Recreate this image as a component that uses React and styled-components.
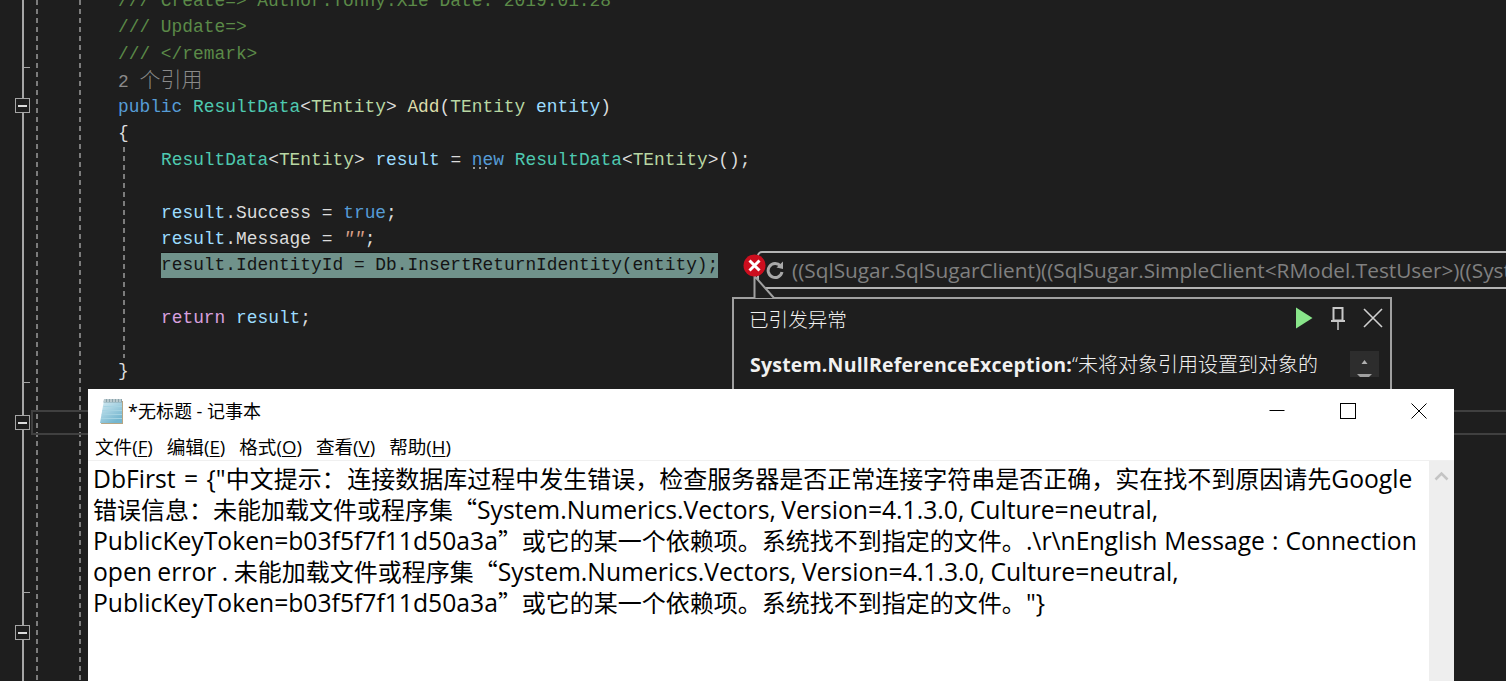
import React from 'react';
import styled, { createGlobalStyle } from 'styled-components';

const GlobalStyle = createGlobalStyle`
    html, body {
        margin: 0;
        padding: 0;
        background: #1e1e1e;
    }
`;

const CJK = '"Noto Sans CJK SC", sans-serif';
const UI = `"Open Sans", "Noto Sans CJK SC", sans-serif`;

const COMMENT = '#5b8a48';
const TYPE = '#4ec9b0';
const GENERIC = '#b8d7a3';
const KEYWORD = '#569cd6';
const METHOD = '#dcdcaa';
const PARAM = '#9cdcfe';
const PLAIN = '#dcdcdc';
const CONTROL = '#d8a0df';
const STRING = '#d69d85';

// 화면 전체
const Page = styled.div`
    position: relative;
    width: 1506px;
    height: 681px;
    overflow: hidden;
    background: #1e1e1e;
`;

const Editor = styled.div`
    display: flex;
    height: 681px;
`;

// 왼쪽 접기 여백 + 들여쓰기 가이드
const Gutter = styled.div`
    display: flex;
    flex: 0 0 118px;
    height: 100%;
    padding-left: 22px;
    box-sizing: border-box;
`;

const OutlineTrack = styled.div`
    position: relative;
    flex: 0 0 2px;
    height: 100%;
    background: #a5a5a5;
`;

const OutlineTick = styled.div`
    position: absolute;
    left: 2px;
    top: ${(p) => p.$top}px;
    width: 6px;
    height: 1px;
    background: #a5a5a5;
`;

const CollapseBox = styled.div`
    position: absolute;
    left: -7px;
    top: ${(p) => p.$top}px;
    z-index: 2;
    width: 15px;
    height: 15px;
    box-sizing: border-box;
    border: 1.5px solid #a5a5a5;
    background: #1e1e1e;
    display: flex;
    align-items: center;
    justify-content: center;

    &::after {
        content: '';
        width: 9px;
        height: 2px;
        background: #dcdcdc;
    }
`;

const IndentGuide = styled.div`
    flex: 0 0 2px;
    margin-left: ${(p) => p.$gap}px;
    height: 100%;
    background: repeating-linear-gradient(#7c7c7c 0 5px, transparent 5px 9px);
`;

const CodePane = styled.div`
    flex: 1;
    margin-top: -12px;
    font-family: "Liberation Mono", monospace;
    font-size: 17.88px;
    color: ${PLAIN};
`;

const Line = styled.div`
    height: 26.45px;
    line-height: 26.45px;
    white-space: pre;
`;

const RefLine = styled(Line)`
    line-height: 23px;
`;

const Block = styled.div`
    margin-left: 5px;
    padding-left: 38px;
    background: repeating-linear-gradient(#7c7c7c 0 5px, transparent 5px 9px) left top / 2px 100% no-repeat;
`;

const Token = styled.span`
    color: ${(p) => p.$c};
`;

const StringToken = styled.span`
    color: ${STRING};
    font-style: italic;
`;

const RefCount = styled.span`
    color: #8a8a8a;
`;

const RefCountHan = styled.span`
    font-family: ${CJK};
    font-size: 21px;
    font-weight: 300;
`;

const Squiggled = styled.span`
    position: relative;
    color: ${KEYWORD};

    &::after {
        content: '';
        position: absolute;
        left: 1px;
        width: 17px;
        bottom: 1px;
        height: 2px;
        background: repeating-linear-gradient(90deg, #9a9a9a 0 2px, transparent 2px 6px);
    }
`;

const CurrentStatement = styled.span`
    display: inline-block;
    height: 26px;
    background: #70928b;
    color: #141414;
    box-shadow: inset 0 1px 0 #141414;
`;

// 현재 줄 표시
const CurrentLine = styled.div`
    position: absolute;
    left: 31px;
    right: -4px;
    top: 410px;
    height: 25px;
    box-sizing: border-box;
    border: 2px solid #404040;
`;

// 데이터 팁
const DataTip = styled.div`
    position: absolute;
    left: 757px;
    right: -10px;
    top: 251px;
    height: 38px;
    box-sizing: border-box;
    border: 2px solid #b4b4b4;
    border-top-left-radius: 5px;
    background: #1e1e1e;
    display: flex;
    align-items: center;
    padding-left: 7px;
    gap: 8px;
    overflow: hidden;
`;

const RefreshIcon = styled.svg`
    flex: none;
`;

const DataTipText = styled.span`
    font-family: "Open Sans", sans-serif;
    font-size: 20.8px;
    color: #808080;
    white-space: nowrap;
`;

const ErrorGlyph = styled.svg`
    position: absolute;
    left: 743px;
    top: 254px;
    z-index: 3;
`;

const Beak = styled.svg`
    position: absolute;
    left: 750px;
    top: 274px;
    z-index: 2;
`;

// 예외 팝업
const ExceptionPopup = styled.div`
    position: absolute;
    left: 732px;
    top: 297px;
    width: 660px;
    height: 110px;
    box-sizing: border-box;
    border: 2px solid #a0a0a0;
    background: #1e1e1e;
    padding: 5px 7px 0 16px;
    color: #f1f1f1;
`;

const PopupHeader = styled.div`
    display: flex;
    align-items: center;
    height: 28px;
`;

const PopupTitle = styled.span`
    flex: 1;
    margin-left: -1px;
    font-family: ${CJK};
    font-size: 19.6px;
    font-weight: 300;
`;

const PopupActions = styled.div`
    display: flex;
    align-items: center;
    gap: 17px;
`;

const PopupBody = styled.div`
    display: flex;
    align-items: center;
    margin-top: 17px;
`;

const ExceptionText = styled.div`
    flex: 1;
    font-family: ${UI};
    font-size: 19.5px;
    white-space: nowrap;
`;

const ExceptionName = styled.strong`
    font-weight: 700;
    letter-spacing: 0.2px;
`;

const ExceptionHan = styled.span`
    font-size: 20px;
    font-weight: 300;
`;

const MiniScroll = styled.div`
    flex: 0 0 29px;
    height: 26px;
    margin-right: 4px;
    background: #2d2d2d;
`;

// 메모장 창
const Notepad = styled.div`
    position: absolute;
    left: 88px;
    top: 389px;
    width: 1366px;
    height: 292px;
    z-index: 5;
    background: #fff;
    display: flex;
    flex-direction: column;
`;

const TitleBar = styled.div`
    display: flex;
    align-items: center;
    height: 44px;
    padding-left: 11px;
    flex: none;
`;

const TitleText = styled.span`
    flex: 1;
    margin: -2px 0 0 4px;
    font-family: ${UI};
    font-size: 18px;
    color: #000;
`;

const WindowButtons = styled.div`
    display: flex;
    align-items: center;
`;

const WindowButton = styled.div`
    width: 71px;
    height: 44px;
    display: flex;
    align-items: center;
    justify-content: center;
`;

const MenuBar = styled.div`
    display: flex;
    align-items: center;
    height: 28px;
    padding: 0 0 3px 7px;
    gap: 14px;
    flex: none;
    box-sizing: border-box;
    border-bottom: 1px solid #f0f0f0;
`;

const MenuItem = styled.span`
    font-family: ${UI};
    font-size: 18.6px;
    color: #000;
    white-space: nowrap;

    u {
        text-underline-offset: 2px;
    }
`;

const EditArea = styled.div`
    flex: 1;
    display: flex;
    min-height: 0;
`;

const TextArea = styled.div`
    flex: 1;
    padding: 1px 0 0 5px;
    font-family: "Open Sans", sans-serif;
    font-size: 24.7px;
    color: #000;
`;

const TextLine = styled.div`
    height: 31px;
    line-height: 31px;
    white-space: nowrap;
    word-spacing: ${(p) => p.$words ?? -1}px;
`;

const Han = styled.span`
    font-family: ${CJK};
    font-size: 24px;
`;

const ScrollTrack = styled.div`
    flex: 0 0 25px;
    background: #eeeeee;
    display: flex;
    justify-content: center;
    padding-top: 10px;
    box-sizing: border-box;
`;

function GutterGuides() {
    return (
        <Gutter>
            <OutlineTrack>
                <OutlineTick $top={67} />
                <CollapseBox $top={98} />
                <OutlineTick $top={382} />
                <CollapseBox $top={415} />
                <OutlineTick $top={592} />
                <CollapseBox $top={625} />
            </OutlineTrack>
            <IndentGuide $gap={12} />
            <IndentGuide $gap={41} />
        </Gutter>
    );
}

function NotepadIcon() {
    return (
        <svg width="25" height="27" viewBox="0 0 25 27">
            <defs>
                <linearGradient id="sheet" x1="0" y1="0" x2="0.6" y2="1">
                    <stop offset="0" stopColor="#dbeef5" />
                    <stop offset="1" stopColor="#74b6cf" />
                </linearGradient>
            </defs>
            <path d="M6 3 L24 3 L24 26 L2 26 Z" fill="#b5a584" />
            <path d="M5 2 L23 2 L23 25 L1 25 Z" fill="url(#sheet)" />
            <path d="M5 1 L23 1 L23 4.5 L4.5 4.5 Z" fill="#8aa3ab" />
            <path d="M6 1 V4 M9 1 V4 M12 1 V4 M15 1 V4 M18 1 V4 M21 1 V4" stroke="#e6eef0" strokeWidth="1" />
            <path d="M4.5 8.5 H23 M3.6 12.5 H23 M2.8 16.5 H23 M2 20.5 H23" stroke="#a5d3e2" strokeWidth="1" />
        </svg>
    );
}

export default function App() {
    return (
        <Page>
            <GlobalStyle />
            <Editor>
                <GutterGuides />
                <CodePane>
                    <Line><Token $c={COMMENT}>/// Create=&gt; Author:Tonny.Xie Date: 2019.01.28</Token></Line>
                    <Line><Token $c={COMMENT}>/// Update=&gt;</Token></Line>
                    <Line><Token $c={COMMENT}>/// &lt;/remark&gt;</Token></Line>
                    <RefLine><RefCount>2 <RefCountHan>个引用</RefCountHan></RefCount></RefLine>
                    <Line>
                        <Token $c={KEYWORD}>public</Token> <Token $c={TYPE}>ResultData</Token>&lt;<Token $c={GENERIC}>TEntity</Token>&gt; <Token $c={METHOD}>Add</Token>(<Token $c={GENERIC}>TEntity</Token> <Token $c={PARAM}>entity</Token>)
                    </Line>
                    <Line>{'{'}</Line>
                    <Block>
                        <Line>
                            <Token $c={TYPE}>ResultData</Token>&lt;<Token $c={GENERIC}>TEntity</Token>&gt; <Token $c={PARAM}>result</Token> = <Squiggled>new</Squiggled> <Token $c={TYPE}>ResultData</Token>&lt;<Token $c={GENERIC}>TEntity</Token>&gt;();
                        </Line>
                        <Line />
                        <Line><Token $c={PARAM}>result</Token>.Success = <Token $c={KEYWORD}>true</Token>;</Line>
                        <Line><Token $c={PARAM}>result</Token>.Message = <StringToken>""</StringToken>;</Line>
                        <Line><CurrentStatement>result.IdentityId = Db.InsertReturnIdentity(entity);</CurrentStatement></Line>
                        <Line />
                        <Line><Token $c={CONTROL}>return</Token> <Token $c={PARAM}>result</Token>;</Line>
                        <Line />
                    </Block>
                    <Line>{'}'}</Line>
                </CodePane>
            </Editor>

            <CurrentLine />

            <DataTip>
                <RefreshIcon width="18" height="20" viewBox="0 0 18 20">
                    <path d="M14.5 6 A7 7 0 1 0 16 12" fill="none" stroke="#a8a8a8" strokeWidth="3" />
                    <path d="M10.5 7.5 L17 1.5 L17 9 Z" fill="#a8a8a8" />
                </RefreshIcon>
                <DataTipText>((SqlSugar.SqlSugarClient)((SqlSugar.SimpleClient&lt;RModel.TestUser&gt;)((System.Object)this).Context)</DataTipText>
            </DataTip>

            <Beak width="28" height="26" viewBox="0 0 28 26">
                <path d="M0 24 H4.5 V2 L24 24" fill="#1e1e1e" stroke="#a0a0a0" strokeWidth="2" />
            </Beak>

            <ErrorGlyph width="23" height="23" viewBox="0 0 23 23">
                <circle cx="11.5" cy="11.5" r="11" fill="#cc0e1e" />
                <path d="M6.5 6.5 L16.5 16.5 M16.5 6.5 L6.5 16.5" stroke="#fff" strokeWidth="3" />
            </ErrorGlyph>

            <ExceptionPopup>
                <PopupHeader>
                    <PopupTitle>已引发异常</PopupTitle>
                    <PopupActions>
                        <svg width="18" height="22" viewBox="0 0 18 22">
                            <path d="M1 0.5 L17.5 11 L1 21.5 Z" fill="#89e58a" />
                        </svg>
                        <svg width="16" height="23" viewBox="0 0 16 23" fill="none" stroke="#c8c8c8">
                            <path d="M3.5 1 H12.5 V13.5 H3.5 Z" strokeWidth="2" />
                            <path d="M1 14 H15" strokeWidth="2" />
                            <path d="M8 14 V23" strokeWidth="1.5" />
                        </svg>
                        <svg width="20" height="20" viewBox="0 0 20 20" stroke="#d0d0d0" strokeWidth="1.6">
                            <path d="M1 1 L19 19 M19 1 L1 19" />
                        </svg>
                    </PopupActions>
                </PopupHeader>
                <PopupBody>
                    <ExceptionText>
                        <ExceptionName>System.NullReferenceException:</ExceptionName>
                        <ExceptionHan>“未将对象引用设置到对象的</ExceptionHan>
                    </ExceptionText>
                    <MiniScroll>
                        <svg width="29" height="26" viewBox="0 0 29 26">
                            <path d="M14.5 9 L17.5 13 H11.5 Z" fill="#b0b0b0" />
                            <path d="M7 23 H22 L19 26 H10 Z" fill="#a0a0a0" />
                        </svg>
                    </MiniScroll>
                </PopupBody>
            </ExceptionPopup>

            <Notepad>
                <TitleBar>
                    <NotepadIcon />
                    <TitleText>*无标题 - 记事本</TitleText>
                    <WindowButtons>
                        <WindowButton>
                            <svg width="16" height="16" viewBox="0 0 16 16" stroke="#000" fill="none">
                                <path d="M0.5 7.5 H15.5" />
                            </svg>
                        </WindowButton>
                        <WindowButton>
                            <svg width="16" height="16" viewBox="0 0 16 16" stroke="#000" fill="none">
                                <rect x="0.5" y="0.5" width="15" height="15" />
                            </svg>
                        </WindowButton>
                        <WindowButton>
                            <svg width="16" height="16" viewBox="0 0 16 16" stroke="#000" fill="none">
                                <path d="M0.5 0.5 L15.5 15.5 M15.5 0.5 L0.5 15.5" />
                            </svg>
                        </WindowButton>
                    </WindowButtons>
                </TitleBar>
                <MenuBar>
                    <MenuItem>文件(<u>F</u>)</MenuItem>
                    <MenuItem>编辑(<u>E</u>)</MenuItem>
                    <MenuItem>格式(<u>O</u>)</MenuItem>
                    <MenuItem>查看(<u>V</u>)</MenuItem>
                    <MenuItem>帮助(<u>H</u>)</MenuItem>
                </MenuBar>
                <EditArea>
                    <TextArea>
                        <TextLine $words={2}>DbFirst = {'{'}"<Han>中文提示：{'\u200a'}连接数据库过程中发生错误，检查服务器是否正常连接字符串是否正确，实在找不到原因请先</Han>Google</TextLine>
                        <TextLine><Han>错误信息：未能加载文件或程序集“</Han>System.Numerics.Vectors, Version=4.1.3.0, Culture=neutral,</TextLine>
                        <TextLine $words={0.6}>PublicKeyToken=b03f5f7f11d50a3a<Han>”或它的某一个依赖项。系统找不到指定的文件。</Han>.\r\nEnglish Message : Connection</TextLine>
                        <TextLine>open error . <Han>未能加载文件或程序集“</Han>System.Numerics.Vectors, Version=4.1.3.0, Culture=neutral,</TextLine>
                        <TextLine>PublicKeyToken=b03f5f7f11d50a3a<Han>”或它的某一个依赖项。系统找不到指定的文件。</Han>"{'}'}</TextLine>
                    </TextArea>
                    <ScrollTrack>
                        <svg width="15" height="10" viewBox="0 0 15 10" fill="none" stroke="#c4c4c4" strokeWidth="2.6">
                            <path d="M1.5 8.5 L7.5 2.5 L13.5 8.5" />
                        </svg>
                    </ScrollTrack>
                </EditArea>
            </Notepad>
        </Page>
    );
}
